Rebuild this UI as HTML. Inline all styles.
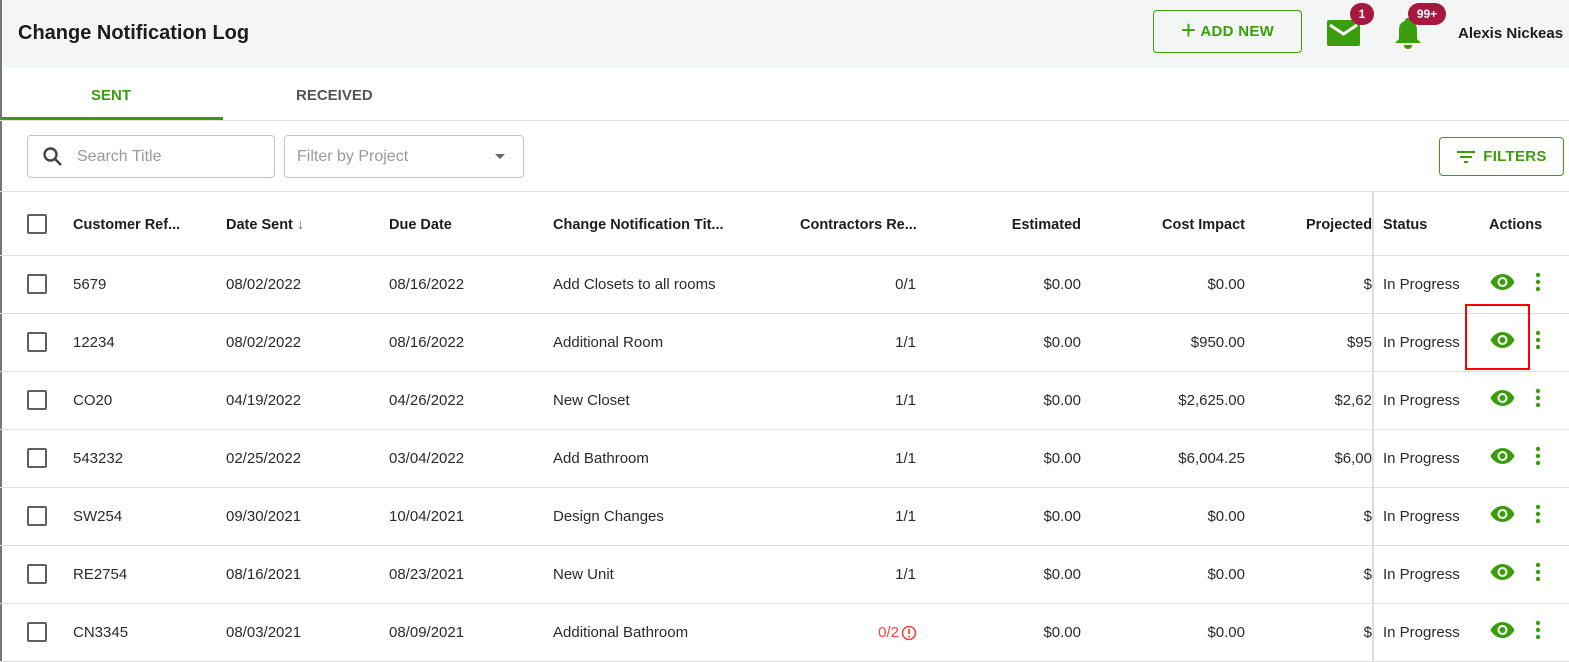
<!DOCTYPE html>
<html><head><meta charset="utf-8"><style>
*{box-sizing:border-box;margin:0;padding:0}
body{width:1569px;height:662px;overflow:hidden;background:#fff;font-family:"Liberation Sans",sans-serif;color:#212121;position:relative}
.a{position:absolute;white-space:nowrap}
.hdr{left:0;top:0;width:1569px;height:68px;background:#f4f5f5}
.g{color:#3a9e0c}
.btn{border:1.5px solid #3a9e0c;border-radius:4px;color:#3a9e0c;font-weight:bold;font-size:15px;letter-spacing:.3px;display:flex;align-items:center;justify-content:center}
.cb{width:20px;height:20px;border:2px solid #5f5f5f;border-radius:2px}
.hl{height:1px;background:#e0e0e0;left:0;width:1569px}
.th{font-size:14.5px;font-weight:bold;color:#1d1d1d}
.td{font-size:15px;color:#2a2a2a}
.r{text-align:right}
.badge{background:#a8173f;color:#fff;font-size:12px;font-weight:bold;border-radius:11px;height:22px;line-height:22px;text-align:center}
</style></head><body>
<div class="a hdr"></div>
<div class="a" style="left:0;top:0;width:2px;height:662px;background:#777"></div>
<div class="a" style="left:18px;top:22px;font-size:20px;font-weight:bold;color:#1c1c1c">Change Notification Log</div>
<div class="a btn" style="left:1153px;top:10px;width:149px;height:43px"><span style="font-size:26px;font-weight:normal;margin-right:4px;margin-top:-3px">+</span>ADD NEW</div>
<svg class="a" style="left:1327px;top:20px" width="33" height="26" viewBox="0 0 33 26"><rect width="33" height="26" rx="2" fill="#3a9e0c"/><path d="M3 5 L16.5 14 L30 5" stroke="#fff" stroke-width="3" fill="none"/></svg>
<div class="a badge" style="left:1350px;top:3px;width:24px">1</div>
<svg class="a" style="left:1395px;top:18px" width="26" height="32" viewBox="0 0 26 32"><path d="M13 0c2 0 3 1 3 3 5 1.5 6 5 6 10v8l4 4H0l4-4v-8c0-5 1-8.5 6-10 0-2 1-3 3-3z" fill="#3a9e0c"/><path d="M9 27h8c0 3-2 4-4 4s-4-1-4-4z" fill="#3a9e0c"/></svg>
<div class="a badge" style="left:1408px;top:3px;width:38px">99+</div>
<div class="a" style="left:1458px;top:25px;font-size:15px;font-weight:bold;color:#1c1c1c">Alexis Nickeas</div>

<div class="a g" style="left:91px;top:87px;font-size:15px;font-weight:bold">SENT</div>
<div class="a" style="left:296px;top:87px;font-size:15px;font-weight:bold;color:#555">RECEIVED</div>
<div class="a hl" style="top:120px"></div>
<div class="a" style="left:2px;top:117px;width:221px;height:3px;background:#3a9e0c"></div>

<div class="a" style="left:27px;top:135px;width:248px;height:43px;border:1px solid #c4c4c4;border-radius:4px"></div>
<svg class="a" style="left:42px;top:146px" width="22" height="22" viewBox="0 0 22 22"><circle cx="8.5" cy="8.5" r="6" stroke="#444" stroke-width="2.4" fill="none"/><path d="M13 13l6 6" stroke="#444" stroke-width="2.6"/></svg>
<div class="a" style="left:77px;top:148px;font-size:16px;color:#9a9a9a">Search Title</div>
<div class="a" style="left:284px;top:135px;width:240px;height:43px;border:1px solid #c4c4c4;border-radius:4px"></div>
<div class="a" style="left:297px;top:148px;font-size:16px;color:#9a9a9a">Filter by Project</div>
<div class="a" style="left:495px;top:154px;width:0;height:0;border-left:5px solid transparent;border-right:5px solid transparent;border-top:5px solid #666"></div>
<div class="a btn" style="left:1439px;top:137px;width:125px;height:39px"><svg width="20" height="14" viewBox="0 0 20 14" style="margin-right:7px"><path d="M1 2h18M4 7h12M8 12h4" stroke="#3a9e0c" stroke-width="2"/></svg>FILTERS</div>
<div class="a hl" style="top:191px"></div>

<div class="a" style="left:1372px;top:192px;width:2px;height:470px;background:#dcdcdc"></div>

<div class="a cb" style="left:27px;top:214px"></div>
<div class="a th" style="left:73px;top:217px">Customer Ref...</div>
<div class="a th" style="left:226px;top:217px">Date Sent <span style="color:#777;font-weight:normal">&#8595;</span></div>
<div class="a th" style="left:389px;top:217px">Due Date</div>
<div class="a th" style="left:553px;top:217px">Change Notification Tit...</div>
<div class="a th" style="left:800px;top:217px">Contractors Re...</div>
<div class="a th r" style="left:981px;top:217px;width:100px">Estimated</div>
<div class="a th r" style="left:1145px;top:217px;width:100px">Cost Impact</div>
<div class="a th" style="left:1306px;top:217px;width:66px;overflow:hidden">Projected</div>
<div class="a th" style="left:1383px;top:217px">Status</div>
<div class="a th" style="left:1489px;top:217px">Actions</div>
<div class="a hl" style="top:255px"></div>

<div id="rows"></div>
<script>
const d=[["5679","08/02/2022","08/16/2022","Add Closets to all rooms","0/1","$0.00","$0.00","$"],
["12234","08/02/2022","08/16/2022","Additional Room","1/1","$0.00","$950.00","$95"],
["CO20","04/19/2022","04/26/2022","New Closet","1/1","$0.00","$2,625.00","$2,62"],
["543232","02/25/2022","03/04/2022","Add Bathroom","1/1","$0.00","$6,004.25","$6,00"],
["SW254","09/30/2021","10/04/2021","Design Changes","1/1","$0.00","$0.00","$"],
["RE2754","08/16/2021","08/23/2021","New Unit","1/1","$0.00","$0.00","$"],
["CN3345","08/03/2021","08/09/2021","Additional Bathroom","0/2","$0.00","$0.00","$"]];
let h="";
d.forEach((r,i)=>{const y=255+i*58,t=y+21;
const red=i==6;
h+=`<div class="a cb" style="left:27px;top:${y+19}px"></div>
<div class="a td" style="left:73px;top:${t}px">${r[0]}</div>
<div class="a td" style="left:226px;top:${t}px">${r[1]}</div>
<div class="a td" style="left:389px;top:${t}px">${r[2]}</div>
<div class="a td" style="left:553px;top:${t}px">${r[3]}</div>
<div class="a td r" style="left:800px;top:${t}px;width:${red?99:116}px;${red?'color:#f2453d':''}">${r[4]}</div>
${red?`<svg class="a" style="left:901px;top:${t+1}px" width="16" height="16" viewBox="0 0 16 16"><circle cx="8" cy="8" r="6.5" stroke="#f2453d" stroke-width="1.6" fill="none"/><path d="M8 4v5" stroke="#f2453d" stroke-width="1.8"/><circle cx="8" cy="11.5" r="1" fill="#f2453d"/></svg>`:''}
<div class="a td r" style="left:981px;top:${t}px;width:100px">${r[5]}</div>
<div class="a td r" style="left:1145px;top:${t}px;width:100px">${r[6]}</div>
<div class="a td r" style="left:1280px;top:${t}px;width:92px;overflow:hidden;direction:rtl">${r[7]}</div>
<div class="a td" style="left:1383px;top:${t}px">In Progress</div>
<svg class="a" style="left:1490px;top:${y+18}px" width="25" height="18" viewBox="0 0 25 18"><path d="M12.5 1C6 1 2 6 0.5 9 2 12 6 17 12.5 17S23 12 24.5 9C23 6 19 1 12.5 1z" fill="#3a9e0c"/><circle cx="12.5" cy="9" r="5" fill="#fff"/><circle cx="12.5" cy="9" r="3" fill="#3a9e0c"/></svg>
<svg class="a" style="left:1535px;top:${y+17}px" width="6" height="20" viewBox="0 0 6 20"><circle cx="3" cy="3" r="2.2" fill="#3a9e0c"/><circle cx="3" cy="10" r="2.2" fill="#3a9e0c"/><circle cx="3" cy="17" r="2.2" fill="#3a9e0c"/></svg>
<div class="a hl" style="top:${y+58}px"></div>`;});
document.getElementById("rows").outerHTML=h;
</script>
<div class="a" style="left:1465px;top:304px;width:65px;height:66px;border:2px solid #f00"></div>
</body></html>
